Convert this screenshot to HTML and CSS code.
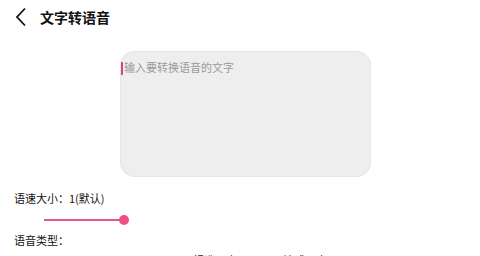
FILE: index.html
```html
<!DOCTYPE html>
<html>
<head>
<meta charset="utf-8">
<link rel="stylesheet" href="styles.css">
</head>
<body>
<div class="header">
  <svg class="back" width="16" height="20" viewBox="0 0 16 20"><path d="M12 1.5 L4 10 L12 18.5" fill="none" stroke="#111" stroke-width="1.8"/></svg>
  <span class="title">文字转语音</span>
</div>
<div class="boxrow">
  <div class="textbox"><span class="cursor"></span><span class="ph">输入要转换语音的文字</span></div>
</div>
<div class="label speed">语速大小：1(默认)</div>
<div class="slider"><div class="track"></div><div class="thumb"></div></div>
<div class="label">语音类型：</div>
<div class="types"><span>标准男声</span><span>情感男声</span></div>
</body>
</html>
```
FILE: styles.css
```css
html, body { margin: 0; padding: 0; background: #fff; overflow: hidden; }
body { font-family: "Noto Sans CJK SC", "Noto Sans", sans-serif; color: #111; width: 480px; height: 256px; }
.header { display: flex; align-items: center; height: 33px; padding-left: 13px; }
.back { display: block; margin-right: 11px; }
.title { font-size: 14px; font-weight: 700; line-height: 20px; }
.boxrow { display: flex; padding-left: 120px; margin-top: 18px; }
.textbox { width: 249px; background: #eeeeee; border: 1px solid #e6e6e6; border-radius: 14px; display: flex; align-items: flex-start; padding-top: 9px; box-sizing: content-box; height: 115px; }
.cursor { width: 2px; height: 13px; background: #e0457a; margin-top: 1px; margin-right: 1px; }
.ph { font-size: 11px; color: #9a9a9a; line-height: 15px; margin-top: -1px; }
.label { font-size: 11px; line-height: 15px; padding-left: 14px; }
.speed { margin-top: 14px; }
.slider { position: relative; height: 16px; margin: 6px 0 5px 44px; width: 86px; }
.track { position: absolute; left: 0; top: 7px; width: 80px; height: 2px; background: #e8557f; }
.thumb { position: absolute; left: 75px; top: 3px; width: 10px; height: 10px; border-radius: 50%; background: #ec4f80; }
.types { display: flex; gap: 46px; padding-left: 193px; font-size: 11px; line-height: 15px; margin-top: 5px; color: #222; }
```
